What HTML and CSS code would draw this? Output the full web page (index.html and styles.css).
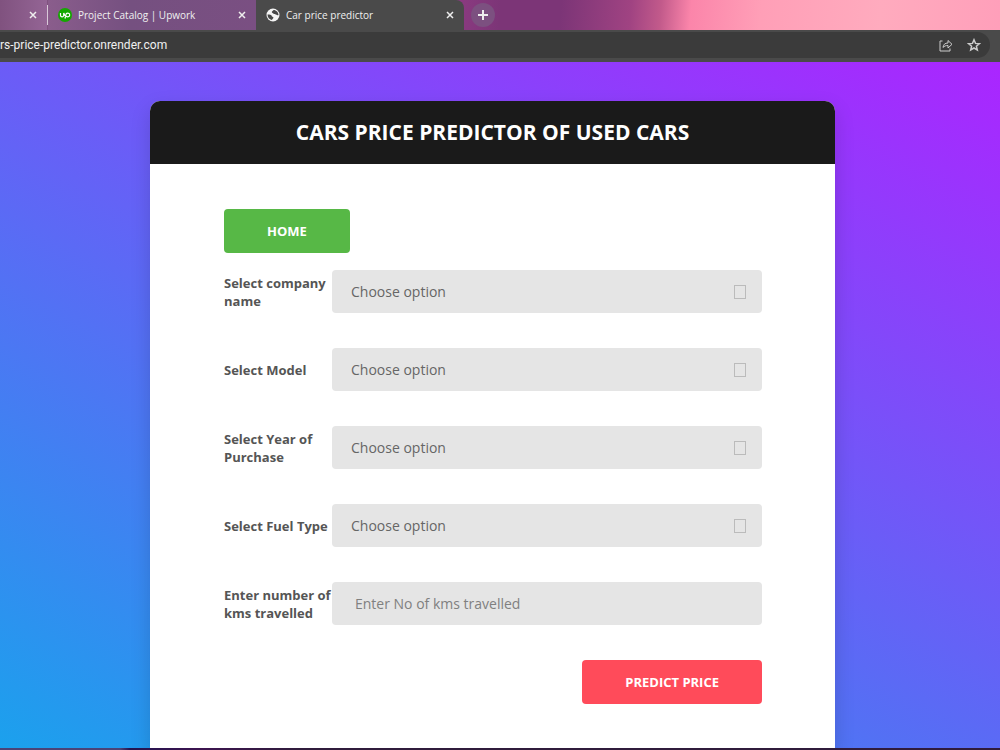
FILE: index.html
```html
<!DOCTYPE html>
<html lang="en">
<head>
    <meta charset="UTF-8">
    <meta name="viewport" content="width=device-width, initial-scale=1.0">
    <title>Car price predictor</title>
    <link rel="stylesheet" href="styles.css">
</head>
<body>
    <!-- Browser bar -->
    <header class="browser">
        <div class="tabs">
            <div class="tab tab-cut">
                <button class="tab-close" aria-label="Close tab">
                    <svg viewBox="0 0 8 8"><path d="M1 1l6 6M7 1l-6 6"/></svg>
                </button>
            </div>
            <div class="tab tab-upwork">
                <svg class="tab-icon" viewBox="0 0 14 14">
                    <circle cx="7" cy="7" r="7" fill="#14a800"/>
                    <path d="M2.5 5v2.2a1.6 1.6 0 0 0 3.2 0V5c.6 1.9 1.5 3.2 2.9 3.7M7 10.5l.9-3.6a1.9 1.9 0 1 1 1.9 2C8.7 8.9 7.8 8.4 7.1 7.4" fill="none" stroke="#fff" stroke-width="1.2"/>
                </svg>
                <span class="tab-title">Project Catalog | Upwork</span>
                <button class="tab-close" aria-label="Close tab">
                    <svg viewBox="0 0 8 8"><path d="M1 1l6 6M7 1l-6 6"/></svg>
                </button>
            </div>
            <div class="tab tab-active">
                <svg class="tab-icon" viewBox="0 0 14 14">
                    <circle cx="7" cy="7" r="6.5" fill="#f4f4f4"/>
                    <path d="M1.5 6.5c1 .1 2.5-.1 3.5.6 1 .6.5 1.4 1.5 1.7 1 .2 1.200 1 .5 1.800L5.800 12C3.300 11.500 1.500 9.500 1.500 6.500zM7.500 2c-.3 1-1.700 1-1.700 2s1.200 1 1.800 1.800c.8 1 2.200.2 2.900 1 .6.7 1.400.5 2 .2C12.500 4.500 10.300 2 7.500 2z" fill="#474747"/>
                </svg>
                <span class="tab-title">Car price predictor</span>
                <button class="tab-close" aria-label="Close tab">
                    <svg viewBox="0 0 8 8"><path d="M1 1l6 6M7 1l-6 6"/></svg>
                </button>
            </div>
            <button class="new-tab" aria-label="New tab">
                <svg viewBox="0 0 12 12"><path d="M6 1v10M1 6h10"/></svg>
            </button>
        </div>
        <div class="toolbar">
            <div class="address">
                <span class="url">rs-price-predictor.onrender.com</span>
                <button class="tool" aria-label="Share">
                    <svg viewBox="0 0 14 14"><path d="M3.500 3H1v10h10v-2.500M4 9.500c.3-3 2-4.500 5-4.500V2.500l4 3.800-4 3.700V7.500C6.800 7.500 5.200 8 4 9.500z"/></svg>
                </button>
                <button class="tool" aria-label="Bookmark">
                    <svg viewBox="0 0 14 14"><path d="M7 1.800l1.500 3.600 3.900.3-3 2.500.9 3.800L7 10l-3.300 2 .9-3.800-3-2.500 3.900-.3z" class="star"/></svg>
                </button>
            </div>
        </div>
    </header>

    <!-- Page -->
    <main class="page">
        <div class="card">
            <div class="card-heading">
                <h1 class="title">Cars price predictor of used cars</h1>
            </div>
            <form class="card-body">
                <button type="button" class="btn btn-green">Home</button>

                <div class="form-row">
                    <label class="name" for="company">Select company name</label>
                    <div class="select-box">
                        <select id="company" class="field"><option>Choose option</option></select>
                        <span class="arrow"></span>
                    </div>
                </div>
                <div class="form-row">
                    <label class="name" for="model">Select Model</label>
                    <div class="select-box">
                        <select id="model" class="field"><option>Choose option</option></select>
                        <span class="arrow"></span>
                    </div>
                </div>
                <div class="form-row">
                    <label class="name" for="year">Select Year of Purchase</label>
                    <div class="select-box">
                        <select id="year" class="field"><option>Choose option</option></select>
                        <span class="arrow"></span>
                    </div>
                </div>
                <div class="form-row">
                    <label class="name" for="fuel">Select Fuel Type</label>
                    <div class="select-box">
                        <select id="fuel" class="field"><option>Choose option</option></select>
                        <span class="arrow"></span>
                    </div>
                </div>
                <div class="form-row">
                    <label class="name" for="kms">Enter number of kms travelled</label>
                    <input id="kms" class="field field-text" type="text" placeholder="Enter No of kms travelled">
                </div>

                <div class="form-end">
                    <button type="button" class="btn btn-red">Predict price</button>
                </div>
            </form>
        </div>
    </main>
    <div class="taskbar"></div>
</body>
</html>
```
FILE: styles.css
```css
* {
    box-sizing: border-box;
}

body {
    margin: 0;
    height: 100vh;
    display: flex;
    flex-direction: column;
    overflow: hidden;
    font-family: "Open Sans", "Noto Sans", sans-serif;
}

button {
    border: none;
    padding: 0;
    font-family: inherit;
    cursor: pointer;
}

/* browser bar */
.browser {
    flex: none;
    background: #4a4a4a;
    color: #f0f0f0;
}

.browser svg {
    display: block;
    fill: none;
    stroke: #eee;
}

.tabs {
    display: flex;
    height: 30px;
    background: linear-gradient(95deg, #8a3a80 46%, #7c3577 50%, #7c3577 56%, #a04382 63%, #c25a8b 66%, #fb85aa 69%, #ff9fb7 76%, #ffabbe 88%, #ff9fba 100%);
}

.tab {
    display: flex;
    align-items: center;
    padding: 0 10px;
    background: #755080;
}

.tab-cut {
    width: 48px;
    justify-content: flex-end;
    background: linear-gradient(90deg, #80527f, #946595);
    border-right: 1px solid #d0b8d0;
    border-image: linear-gradient(transparent 20%, #d8c8d8 20%, #d8c8d8 80%, transparent 80%) 1;
}

.tab-upwork {
    width: 208px;
    background: linear-gradient(90deg, #8a5d8c, #755080 40%, #7a4f82);
}

.tab-active {
    width: 208px;
    background: #4a4a4a;
    border-top-right-radius: 8px;
}

.tab .tab-icon {
    width: 14px;
    height: 14px;
    stroke: none;
}

.tab-title {
    flex: 1;
    padding-left: 6px;
    font-size: 10px;
    white-space: nowrap;
}

.tab-close {
    width: 8px;
    background: none;
}

.tab-close svg {
    width: 8px;
    height: 8px;
    stroke-width: 1.5;
}

.new-tab {
    display: flex;
    align-items: center;
    justify-content: center;
    width: 24px;
    height: 24px;
    margin: 3px 7px;
    border-radius: 50%;
    background: #7c5080;
}

.new-tab svg {
    width: 12px;
    height: 12px;
    stroke-width: 2;
}

.toolbar {
    padding: 2px 10px 4px 0;
}

.address {
    display: flex;
    align-items: center;
    gap: 14px;
    height: 26px;
    padding-right: 9px;
    border-radius: 0 13px 13px 0;
    background: #3b3b3b;
}

.url {
    flex: 1;
    font-family: Roboto, "Open Sans", sans-serif;
    font-size: 12px;
}

.tool {
    background: none;
}

.tool svg {
    width: 14px;
    height: 14px;
    stroke: #ccc;
}

.tool .star {
    stroke-width: 1.5;
}

/* page */
.page {
    flex: 1;
    min-height: 0;
    overflow: hidden;
    padding: 39px 165px 0 150px;
    background: linear-gradient(28deg, #1ba1ed, #ab25ff);
}

.card {
    min-height: 100%;
    border-radius: 10px 10px 0 0;
    background: #fff;
    box-shadow: 0 8px 20px rgba(0, 0, 0, 0.15);
}

.card-heading {
    padding: 16px 0;
    border-radius: 10px 10px 0 0;
    background: #1a1a1a;
}

.title {
    margin: 0;
    font-size: 21px;
    line-height: 31px;
    font-weight: 700;
    text-align: center;
    text-transform: uppercase;
    color: #fff;
}

.card-body {
    padding: 45px 73px 45px 74px;
}

.btn {
    display: block;
    height: 44px;
    padding: 0 43px;
    border-radius: 4px;
    font-size: 13px;
    font-weight: 700;
    text-transform: uppercase;
    color: #fff;
}

.btn-green {
    margin-bottom: 17px;
    background: #57b846;
}

.btn-red {
    background: #ff4b5a;
}

.form-row {
    display: flex;
    align-items: center;
    margin-bottom: 35px;
}

.name {
    flex: none;
    width: 108px;
    font-size: 13px;
    line-height: 18px;
    font-weight: 700;
    color: #555;
}

.select-box {
    position: relative;
    flex: 1;
}

.field {
    display: block;
    width: 100%;
    height: 43px;
    padding: 0 19px;
    border: none;
    border-radius: 4px;
    background: #e5e5e5;
    font-family: inherit;
    font-size: 14px;
    color: #666;
    appearance: none;
}

.field-text {
    flex: 1;
    padding: 0 23px;
}

.field-text::placeholder {
    color: #808080;
}

/* missing glyph box over the select */
.arrow {
    position: absolute;
    top: 15px;
    right: 16px;
    width: 12px;
    height: 14px;
    border: 1px solid #bbb;
    pointer-events: none;
}

.form-end {
    display: flex;
    justify-content: flex-end;
}

.taskbar {
    flex: none;
    height: 2px;
    background: linear-gradient(90deg, #4b4377 12%, #221450 13%, #3d1450 20%, #301c3c 30%, #301c3c);
}
```
